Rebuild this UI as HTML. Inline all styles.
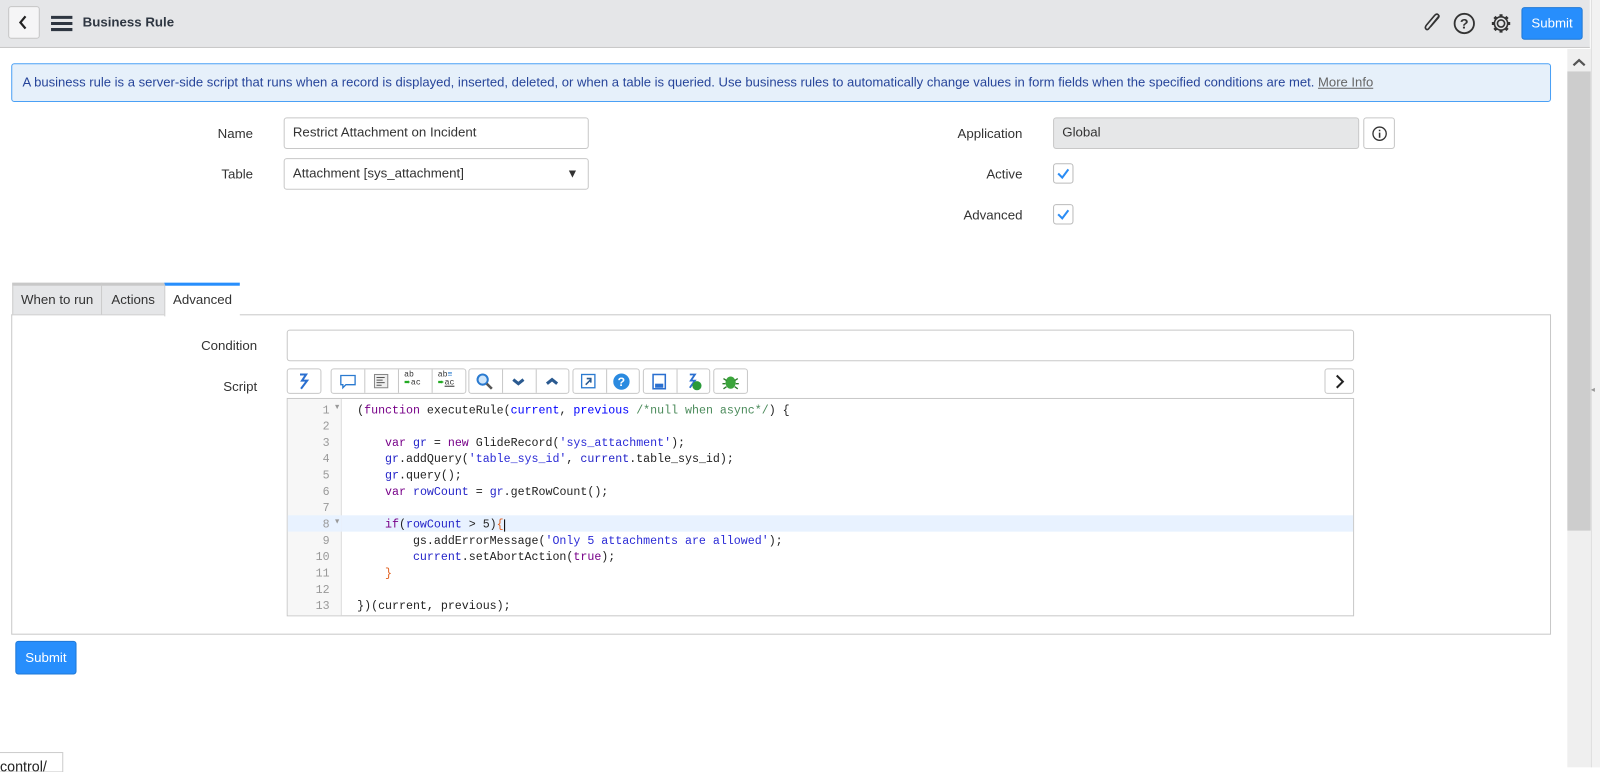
<!DOCTYPE html>
<html><head><meta charset="utf-8"><style>
*{box-sizing:border-box;margin:0;padding:0}
html,body{width:1600px;height:767px;overflow:hidden;background:#fff;font-family:"Liberation Sans",Arial,sans-serif;color:#333}
#w{position:absolute;left:0;top:0;width:1568px;height:752px;transform:scale(1.02041);transform-origin:0 0}
.a{position:absolute}
.hdr{left:0;top:0;width:1558px;height:47px;background:#e5e6e8;border-bottom:1px solid #c8c8c8}
.btn{border:1px solid #c6c6c6;border-radius:3px;background:#f5f5f6}
.lbl{font-size:13px;color:#333;text-align:right}
.inp{border:1px solid #c8c8c8;border-radius:3px;background:#fff;font-size:13px;padding-left:8px;line-height:28px}
.cb{width:20px;height:20px;border:1px solid #bbb;border-radius:3px;background:#fff}
.tab{top:277px;height:31px;font-size:13px;line-height:32px;text-align:center;background:#e5e6e8;border:1px solid #ccc;border-bottom:none}
.tb{top:361px;height:25px;border:1px solid #c8c8c8;border-radius:3px;background:#fff}
.tb i{position:absolute;top:0;height:23px;border-left:1px solid #c8c8c8}
.code{font-family:"Liberation Mono",monospace;font-size:11.4px;white-space:pre;line-height:16px}
.kw{color:#770088}.vr{color:#0000ff}.st{color:#2a2ad6}.cm{color:#4a8a5a}.df{color:#222}.vb{color:#2323c8}
.ln{font-family:"Liberation Mono",monospace;font-size:11.4px;color:#999;line-height:16px;text-align:right}
</style></head><body><div id="w">
<div class="a hdr"></div>
<div class="a btn" style="left:8px;top:6px;width:31px;height:32px"></div>
<svg class="a" style="left:17px;top:14px" width="12" height="16"><path d="M8 2 L3 8 L8 14" stroke="#222" stroke-width="2.2" fill="none"/></svg>
<svg class="a" style="left:50px;top:15px" width="21" height="16"><path d="M0 2H21M0 8H21M0 14H21" stroke="#2e3641" stroke-width="3"/></svg>
<div class="a" style="left:81px;top:14px;font-size:13px;font-weight:bold;color:#2e3641">Business Rule</div>
<svg class="a" style="left:1393px;top:11px" width="22" height="22" viewBox="0 0 22 22"><path d="M17 5 L8 16 Q6 19 4.5 17.5 Q3 16 5 13.5 L13 4 Q15 2 16.5 3.5 Q18 5 16 7 L9 15" stroke="#333" stroke-width="1.6" fill="none"/></svg>
<svg class="a" style="left:1424px;top:12px" width="22" height="22"><circle cx="11" cy="11" r="9.5" stroke="#333" stroke-width="1.8" fill="none"/><text x="11" y="16" font-size="14" font-weight="bold" text-anchor="middle" fill="#333" font-family="Liberation Sans">?</text></svg>
<svg class="a" style="left:1460px;top:12px" width="22" height="22" viewBox="0 0 22 22"><circle cx="11" cy="11" r="3.5" stroke="#333" stroke-width="1.6" fill="none"/><path d="M11 2 L11 5 M11 17 L11 20 M2 11 L5 11 M17 11 L20 11 M4.6 4.6 L6.8 6.8 M15.2 15.2 L17.4 17.4 M4.6 17.4 L6.8 15.2 M15.2 6.8 L17.4 4.6" stroke="#333" stroke-width="3"/><circle cx="11" cy="11" r="6.5" stroke="#333" stroke-width="1.6" fill="none"/></svg>
<div class="a" style="left:1491px;top:7px;width:60px;height:32px;background:#278efc;border:1px solid #1f78d6;border-radius:3px;color:#fff;font-size:13px;line-height:30px;text-align:center">Submit</div>
<div class="a" style="left:1536px;top:48px;width:23px;height:704px;background:#efefef"></div>
<div class="a" style="left:1536px;top:70px;width:23px;height:450px;background:#cdcdcd"></div>
<svg class="a" style="left:1540px;top:56px" width="15" height="10"><path d="M2 8 L7.5 3 L13 8" stroke="#555" stroke-width="2.2" fill="none"/></svg>
<div class="a" style="left:1559px;top:0;width:9px;height:752px;background:#f2f2f2;border-left:1px solid #ddd"></div>
<div class="a" style="left:1559px;top:377px;font-size:8px;color:#999">◂</div>

<div class="a" style="left:11px;top:62px;width:1509px;height:38px;background:#e6f0fa;border:1px solid #4aa0f5;border-radius:3px"></div>
<div class="a" style="left:22px;top:73px;font-size:12.8px;color:#27459a;white-space:nowrap">A business rule is a server-side script that runs when a record is displayed, inserted, deleted, or when a table is queried. Use business rules to automatically change values in form fields when the specified conditions are met. <span style="color:#666;text-decoration:underline">More Info</span></div>

<div class="a lbl" style="left:150px;top:123px;width:98px">Name</div>
<div class="a inp" style="left:278px;top:115px;width:299px;height:31px">Restrict Attachment on Incident</div>
<div class="a lbl" style="left:150px;top:163px;width:98px">Table</div>
<div class="a inp" style="left:278px;top:155px;width:299px;height:31px">Attachment [sys_attachment]<span style="position:absolute;left:276px;top:0;font-size:12px">▼</span></div>

<div class="a lbl" style="left:880px;top:123px;width:122px">Application</div>
<div class="a inp" style="left:1032px;top:115px;width:300px;height:31px;background:#e6e7e8">Global</div>
<div class="a btn" style="left:1336px;top:115px;width:31px;height:31px;background:#fff"></div>
<svg class="a" style="left:1344px;top:123px" width="16" height="16"><circle cx="8" cy="8" r="6.5" stroke="#333" stroke-width="1.3" fill="none"/><path d="M8 7V12M8 4.2V5.6" stroke="#333" stroke-width="1.5"/></svg>
<div class="a lbl" style="left:880px;top:163px;width:122px">Active</div>
<div class="a cb" style="left:1032px;top:160px"></div>
<svg class="a" style="left:1035px;top:163px" width="14" height="14"><path d="M2 7 L6 11 L12 3" stroke="#2a8cf5" stroke-width="2" fill="none"/></svg>
<div class="a lbl" style="left:880px;top:203px;width:122px">Advanced</div>
<div class="a cb" style="left:1032px;top:200px"></div>
<svg class="a" style="left:1035px;top:203px" width="14" height="14"><path d="M2 7 L6 11 L12 3" stroke="#2a8cf5" stroke-width="2" fill="none"/></svg>

<div class="a" style="left:11px;top:308px;width:1509px;height:314px;border:1px solid #c8c8c8"></div>
<div class="a tab" style="left:12px;width:88px;border-top:3px solid #c8c8c8;line-height:28px">When to run</div>
<div class="a tab" style="left:99px;width:63px;border-top:3px solid #c8c8c8;line-height:28px">Actions</div>
<div class="a tab" style="left:161px;width:74px;height:33px;background:#fff;border-top:3px solid #278efc;border-right:none;line-height:28px">Advanced</div>

<div class="a lbl" style="left:150px;top:331px;width:102px">Condition</div>
<div class="a inp" style="left:281px;top:323px;width:1046px;height:31px"></div>
<div class="a lbl" style="left:150px;top:371px;width:102px">Script</div>

<div class="a tb" style="left:281px;width:34px"></div>
<div class="a tb" style="left:324px;width:133px"><i style="left:32px"></i><i style="left:65px"></i><i style="left:98px"></i></div>
<div class="a tb" style="left:459px;width:99px"><i style="left:32px"></i><i style="left:65px"></i></div>
<div class="a tb" style="left:561px;width:66px"><i style="left:32px"></i></div>
<div class="a tb" style="left:630px;width:66px"><i style="left:32px"></i></div>
<div class="a tb" style="left:699px;width:34px"></div>
<div class="a tb" style="left:1298px;width:29px"></div>
<svg class="a" style="left:1307px;top:366px" width="12" height="16"><path d="M3 2 L9 8 L3 14" stroke="#222" stroke-width="2" fill="none"/></svg>
<svg class="a" style="left:288px;top:364px" width="20" height="20"><path d="M6 3 L12 3 L8 9 L13 9 L7 17" stroke="#2a6fd0" stroke-width="2" fill="none"/></svg>
<svg class="a" style="left:332px;top:366px" width="18" height="16"><path d="M2 2H16V11H7L4 14V11H2Z" stroke="#2a7ad0" stroke-width="1.3" fill="#fff"/></svg>
<svg class="a" style="left:366px;top:366px" width="16" height="16"><rect x="1" y="1" width="13" height="13" fill="#eee" stroke="#888"/><path d="M3 4H11M3 6.5H9M3 9H11M3 11.5H8" stroke="#555"/></svg>
<div class="a" style="left:396px;top:364px;font-size:8px;line-height:8px;font-family:'Liberation Mono',monospace;color:#333">ab<br><span style="color:#2a2">➨</span>ac</div>
<div class="a" style="left:429px;top:364px;font-size:8px;line-height:8px;font-family:'Liberation Mono',monospace;color:#333">ab<span style="color:#27c">≡</span><br><span style="color:#2a2">➨</span><u>ac</u></div>
<svg class="a" style="left:466px;top:365px" width="18" height="18"><circle cx="7" cy="7" r="5" stroke="#2a7ad0" stroke-width="2" fill="#cfe6fb"/><path d="M11 11 L16 16" stroke="#555" stroke-width="2.5"/></svg>
<svg class="a" style="left:500px;top:367px" width="16" height="14"><path d="M3 5 L8 9 L13 5" stroke="#2a5a90" stroke-width="3" fill="none"/></svg>
<svg class="a" style="left:533px;top:367px" width="16" height="14"><path d="M3 9 L8 5 L13 9" stroke="#2a5a90" stroke-width="3" fill="none"/></svg>
<svg class="a" style="left:569px;top:366px" width="16" height="16"><rect x="1" y="1" width="13" height="13" fill="#fff" stroke="#2a7ad0" stroke-width="1.3"/><path d="M5 11 L10 6 M6 5H10V9" stroke="#2a5a90" stroke-width="1.5" fill="none"/></svg>
<svg class="a" style="left:600px;top:365px" width="18" height="18"><circle cx="9" cy="9" r="8" fill="#2a8ae0"/><text x="9" y="13.5" font-size="12" font-weight="bold" text-anchor="middle" fill="#fff" font-family="Liberation Sans">?</text></svg>
<svg class="a" style="left:638px;top:366px" width="16" height="16"><rect x="2" y="1" width="12" height="14" fill="#fff" stroke="#2a6fd0" stroke-width="1.5"/><rect x="4" y="10" width="8" height="4" fill="#2a6fd0"/></svg>
<svg class="a" style="left:670px;top:364px" width="20" height="20"><path d="M6 3 L11 3 L7 9 L11 9 L6 16" stroke="#2a6fd0" stroke-width="1.8" fill="none"/><circle cx="13" cy="14" r="4.5" fill="#2a9a3a"/></svg>
<svg class="a" style="left:706px;top:364px" width="20" height="20"><ellipse cx="10" cy="11" rx="5" ry="6" fill="#3aa53a"/><path d="M3 7 L6 9 M17 7 L14 9 M2 12H5 M18 12H15 M3 17 L6 15 M17 17 L14 15" stroke="#2a7a2a" stroke-width="1.3"/></svg>

<div class="a" style="left:281px;top:390px;width:1046px;height:214px;border:1px solid #c8c8c8;background:#fff"></div>
<div class="a" style="left:282px;top:391px;width:53px;height:212px;background:#f7f7f7;border-right:1px solid #ddd"></div>
<div class="a" style="left:335px;top:505px;width:991px;height:16px;background:#e8f2ff"></div>
<div class="a" style="left:282px;top:505px;width:53px;height:16px;background:#e8f2ff"></div>
<div class="a ln" style="left:282px;top:395px;width:41px">1<br>2<br>3<br>4<br>5<br>6<br>7<br>8<br>9<br>10<br>11<br>12<br>13</div>
<div class="a" style="left:327px;top:396px;font-size:7px;color:#999">▼</div>
<div class="a" style="left:327px;top:508px;font-size:7px;color:#999">▼</div>
<div class="a code df" style="left:350px;top:395px">(<span class="kw">function</span> executeRule(<span class="vr">current</span>, <span class="vr">previous</span> <span class="cm">/*null when async*/</span>) {

    <span class="kw">var</span> <span class="vb">gr</span> = <span class="kw">new</span> GlideRecord(<span class="st">'sys_attachment'</span>);
    <span class="vb">gr</span>.addQuery(<span class="st">'table_sys_id'</span>, <span class="vb">current</span>.table_sys_id);
    <span class="vb">gr</span>.query();
    <span class="kw">var</span> <span class="vb">rowCount</span> = <span class="vb">gr</span>.getRowCount();

    <span class="kw">if</span>(<span class="vb">rowCount</span> &gt; 5)<span style="color:#e06020">{</span><span style="border-left:1px solid #000"></span>
        gs.addErrorMessage(<span class="st">'Only 5 attachments are allowed'</span>);
        <span class="vb">current</span>.setAbortAction(<span class="kw">true</span>);
    <span style="color:#e06020">}</span>

})(current, previous);</div>

<div class="a" style="left:15px;top:628px;width:60px;height:33px;background:#278efc;border:1px solid #1f78d6;border-radius:3px;color:#fff;font-size:13px;line-height:31px;text-align:center">Submit</div>
<div class="a" style="left:-4px;top:737px;width:66px;height:20px;border:1px solid #ccc;background:#fff;font-size:14px;line-height:26px;padding-left:3px;overflow:hidden;color:#222">control/</div>
</div></body></html>
